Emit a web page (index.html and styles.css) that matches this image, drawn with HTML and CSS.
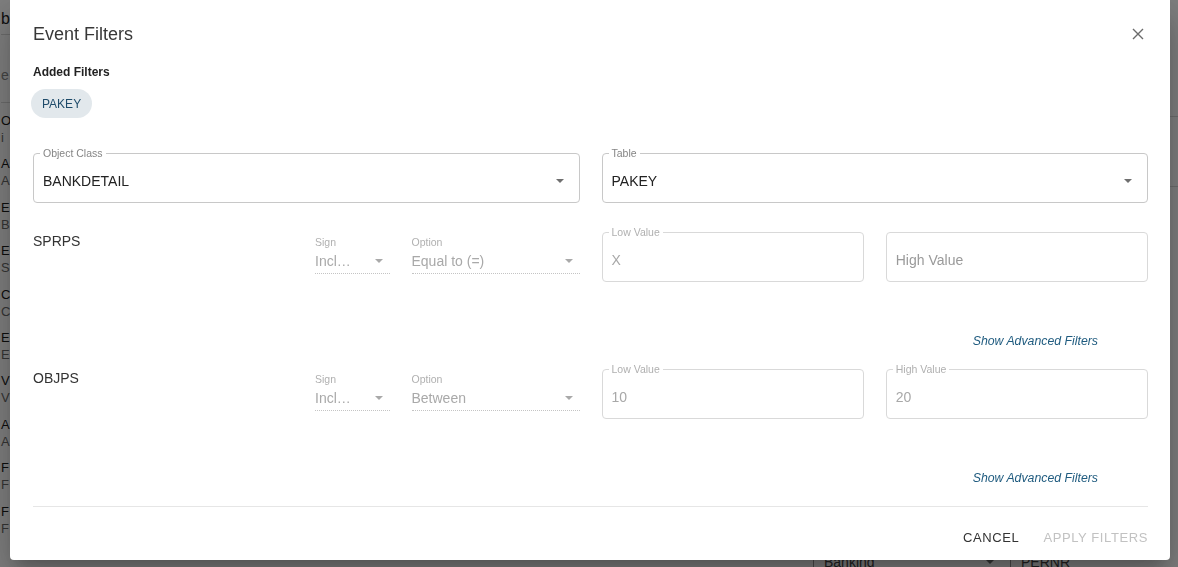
FILE: index.html
```html
<!DOCTYPE html>
<html lang="en">
<head>
<meta charset="utf-8">
<title>Event Filters</title>
<link rel="stylesheet" href="styles.css">
</head>
<body>
<div class="page">
  <aside class="bg-side">
    <div class="bg-brand">b</div>
    <div class="bg-search">e</div>
    <ul class="bg-list">
      <li><span class="t1">O</span><span class="t2">i</span></li>
      <li><span class="t1">A</span><span class="t2">A</span></li>
      <li><span class="t1">E</span><span class="t2">B</span></li>
      <li><span class="t1">E</span><span class="t2">S</span></li>
      <li><span class="t1">C</span><span class="t2">C</span></li>
      <li><span class="t1">E</span><span class="t2">E</span></li>
      <li><span class="t1">V</span><span class="t2">V</span></li>
      <li><span class="t1">A</span><span class="t2">A</span></li>
      <li><span class="t1">F</span><span class="t2">F</span></li>
      <li><span class="t1">F</span><span class="t2">F</span></li>
    </ul>
  </aside>
  <main class="bg-main">
    <div class="bg-top"></div>
    <div class="bg-band"></div>
    <div class="bg-tools"><span class="bg-btn">S</span></div>
    <div class="bg-form">
      <div class="bg-field"><span>Banking</span><span class="arrow"></span></div>
      <div class="bg-field"><span>PERNR</span><span class="arrow"></span></div>
    </div>
  </main>
</div>

<div class="backdrop"></div>

<div class="dialog" role="dialog" aria-label="Event Filters">
  <header class="dlg-head">
    <h2 class="dlg-title">Event Filters</h2>
    <button class="close" aria-label="Close">
      <svg width="12" height="12" viewBox="0 0 12 12"><path d="M1 1L11 11M11 1L1 11" stroke="#6b6b6b" stroke-width="1.4" fill="none"/></svg>
    </button>
  </header>

  <h3 class="added-title">Added Filters</h3>
  <div class="chips"><span class="chip">PAKEY</span></div>

  <div class="grid2 sel-row">
    <fieldset class="outlined">
      <legend>Object Class</legend>
      <span class="val">BANKDETAIL</span>
      <span class="arrow"></span>
    </fieldset>
    <fieldset class="outlined">
      <legend>Table</legend>
      <span class="val">PAKEY</span>
      <span class="arrow"></span>
    </fieldset>
  </div>

  <div class="filter">
    <div class="grid2">
      <div class="left">
        <div class="fname">SPRPS</div>
        <div class="mini">
          <span class="mlabel">Sign</span>
          <div class="mini-in"><span class="mval">Incl…</span><span class="arrow dis"></span></div>
        </div>
        <div class="mini">
          <span class="mlabel">Option</span>
          <div class="mini-in"><span class="mval">Equal to (=)</span><span class="arrow dis"></span></div>
        </div>
      </div>
      <div class="right">
        <fieldset class="outlined dis">
          <legend>Low Value</legend>
          <span class="val">X</span>
        </fieldset>
        <fieldset class="outlined dis">
          <legend class="empty"></legend>
          <span class="ph">High Value</span>
        </fieldset>
      </div>
    </div>
    <div class="adv"><a class="adv-link">Show Advanced Filters</a></div>
  </div>

  <div class="filter second">
    <div class="grid2">
      <div class="left">
        <div class="fname">OBJPS</div>
        <div class="mini">
          <span class="mlabel">Sign</span>
          <div class="mini-in"><span class="mval">Incl…</span><span class="arrow dis"></span></div>
        </div>
        <div class="mini">
          <span class="mlabel">Option</span>
          <div class="mini-in"><span class="mval">Between</span><span class="arrow dis"></span></div>
        </div>
      </div>
      <div class="right">
        <fieldset class="outlined dis">
          <legend>Low Value</legend>
          <span class="val">10</span>
        </fieldset>
        <fieldset class="outlined dis">
          <legend>High Value</legend>
          <span class="val">20</span>
        </fieldset>
      </div>
    </div>
    <div class="adv"><a class="adv-link">Show Advanced Filters</a></div>
  </div>

  <footer class="actions">
    <button class="btn">CANCEL</button>
    <button class="btn" disabled>APPLY FILTERS</button>
  </footer>
</div>
</body>
</html>
```

FILE: styles.css
```css
html, body {
  margin: 0;
  padding: 0;
  height: 100%;
  overflow: hidden;
}
body {
  font-family: "Liberation Sans", Arial, sans-serif;
  background: #fff;
  color: #222;
}

/* ---------- background page (dimmed, under the dialog) ---------- */
.page {
  display: flex;
  height: 567px;
  overflow: hidden;
}
.bg-side {
  width: 10px;
  flex: none;
  padding-left: 1px;
  box-sizing: border-box;
  overflow: hidden;
}
.bg-brand {
  height: 35px;
  box-sizing: border-box;
  border-bottom: 1px solid #d8d8d8;
  font-size: 16px;
  line-height: 38px;
  color: #222;
}
.bg-search {
  height: 68px;
  box-sizing: border-box;
  border-bottom: 1px solid #d8d8d8;
  padding-top: 32px;
  font-size: 14px;
  line-height: 16px;
  color: #888;
}
.bg-list {
  list-style: none;
  margin: 0;
  padding: 0;
}
.bg-list li {
  height: 43.4px;
  box-sizing: border-box;
  padding-top: 9px;
  display: flex;
  flex-direction: column;
  font-size: 13px;
  line-height: 17px;
}
.bg-list .t1 { color: #1a1a1a; }
.bg-list .t2 { color: #6a6a6a; }

.bg-main {
  flex: 1;
  display: flex;
  flex-direction: column;
}
.bg-main > * { flex: none; }
.bg-top {
  height: 117px;
  box-sizing: border-box;
  border-bottom: 1px solid #d8d8d8;
}
.bg-band {
  height: 70px;
  box-sizing: border-box;
  border-bottom: 1px solid #d8d8d8;
}
.bg-tools {
  margin-top: 111px;
  height: 32px;
  display: flex;
  justify-content: flex-end;
}
.bg-btn {
  background: #1b3f5e;
  color: #fff;
  font-size: 13px;
  line-height: 32px;
  width: 8px;
  padding-left: 2px;
  overflow: hidden;
}
.bg-form {
  margin-top: 222px;
  margin-left: 803px;
  display: flex;
  gap: 8px;
}
.bg-field {
  width: 170px;
  border-left: 1px solid #999;
  padding: 2px 8px 0 10px;
  display: flex;
  justify-content: space-between;
  align-items: flex-start;
  font-size: 14px;
  line-height: 16px;
  color: #444;
  height: 14px;
}
.bg-field .arrow { margin-top: 6px; }

.backdrop {
  position: fixed;
  inset: 0;
  background: rgba(0, 0, 0, 0.5);
}

/* ---------- dialog ---------- */
.dialog {
  position: fixed;
  top: 0;
  left: 10px;
  width: 1160px;
  box-sizing: border-box;
  padding: 0 22px 5px 23px;
  background: #fff;
  border-radius: 0 0 4px 4px;
  box-shadow: 0 11px 15px -7px rgba(0,0,0,.2), 0 24px 38px 3px rgba(0,0,0,.14), 0 9px 46px 8px rgba(0,0,0,.12);
}
.dlg-head {
  padding-top: 23px;
  height: 22px;
  display: flex;
  align-items: center;
  justify-content: space-between;
}
.dlg-title {
  margin: 0;
  font-size: 18px;
  line-height: 22px;
  font-weight: 400;
  color: #383838;
}
.close {
  border: 0;
  background: none;
  padding: 0;
  margin-right: 4px;
  width: 12px;
  height: 12px;
  display: flex;
  cursor: pointer;
}
.added-title {
  margin: 19px 0 0;
  font-size: 12px;
  line-height: 16px;
  font-weight: 700;
  color: #222;
}
.chips {
  margin-top: 9px;
  display: flex;
}
.chip {
  margin-left: -2px;
  height: 29px;
  padding: 0 11px;
  display: inline-flex;
  align-items: center;
  border-radius: 15px;
  background: #e2e8ec;
  color: #1e4b6a;
  font-size: 12px;
}

.grid2 {
  display: grid;
  grid-template-columns: 1fr 1fr;
  column-gap: 22px;
}
.sel-row { margin-top: 29px; }

.outlined {
  margin: 0;
  min-width: 0;
  height: 56px;
  box-sizing: border-box;
  padding: 0 11px 0 9px;
  border: 1px solid #c8c8c8;
  border-radius: 4px;
  display: flex;
  align-items: center;
}
.outlined legend {
  margin-left: -3px;
  padding: 0 3px;
  font-size: 10.5px;
  line-height: 12px;
  height: 12px;
  color: #858585;
}
.outlined legend.empty {
  padding: 0;
  width: 0;
}
.outlined .val {
  font-size: 14px;
  line-height: 18px;
  color: #222;
}
.outlined .arrow { margin-left: auto; margin-right: 4px; }
.outlined.dis { border-color: #d9d9d9; }
.outlined.dis legend { color: #b0b0b0; }
.outlined.dis .val { color: #a8a8a8; }
.outlined .ph {
  font-size: 14px;
  line-height: 18px;
  color: #9a9a9a;
}

.arrow {
  flex: none;
  width: 0;
  height: 0;
  border-left: 4px solid transparent;
  border-right: 4px solid transparent;
  border-top: 4px solid #6f6f6f;
}
.arrow.dis { border-top-color: #a9a9a9; }

.filter { margin-top: 23px; }
.filter.second { margin-top: 15px; }
.left {
  display: grid;
  grid-template-columns: 1fr 75px 168px;
  column-gap: 21.5px;
  height: 56px;
}
.right {
  display: grid;
  grid-template-columns: 1fr 1fr;
  column-gap: 22px;
}
.fname {
  padding-top: 7px;
  font-size: 14px;
  line-height: 16px;
  color: #333;
}
.mini {
  padding-top: 10px;
  display: flex;
  flex-direction: column;
}
.mlabel {
  font-size: 10.5px;
  line-height: 12px;
  color: #b0b0b0;
}
.mini-in {
  margin-top: 4px;
  padding-bottom: 3px;
  border-bottom: 1px dotted #c4c4c4;
  display: flex;
  align-items: center;
}
.mval {
  font-size: 14px;
  line-height: 18px;
  color: #a9a9a9;
  white-space: nowrap;
}
.mini-in .arrow { margin-left: auto; margin-right: 7px; }

.adv {
  margin-top: 52px;
  padding-right: 50px;
  text-align: right;
  font-size: 12.3px;
  line-height: 14px;
}
.adv-link {
  font-style: italic;
  color: #1f5b7f;
  cursor: pointer;
}

.actions {
  margin-top: 21px;
  border-top: 1px solid #e6e6e6;
  padding-top: 12px;
  display: flex;
  justify-content: flex-end;
  gap: 24px;
}
.btn {
  height: 36px;
  padding: 0;
  border: 0;
  background: none;
  font-family: "Liberation Sans", Arial, sans-serif;
  font-size: 13px;
  letter-spacing: 0.6px;
  color: #333;
  cursor: pointer;
}
.btn:disabled {
  color: #c2c2c2;
  cursor: default;
}
```
